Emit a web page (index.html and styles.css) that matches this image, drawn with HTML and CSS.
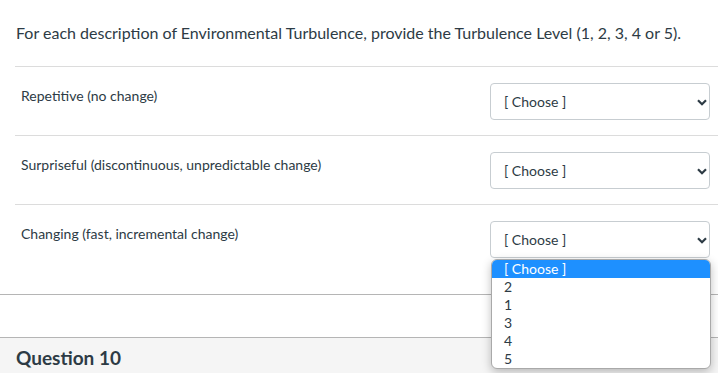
FILE: index.html
```html
<!DOCTYPE html>
<html lang="en">
<head>
    <meta charset="UTF-8">
    <title>Question 9</title>
    <link rel="stylesheet" href="styles.css">
</head>
<body>

    <!-- Question body -->
    <div class="question">
        <p class="question-text">For each description of Environmental Turbulence, provide the Turbulence Level (1, 2, 3, 4 or 5).</p>

        <div class="answers">
            <div class="answer-row">
                <span class="answer-label">Repetitive (no change)</span>
                <span class="select-wrap">
                    <select class="answer-select">
                        <option>[ Choose ]</option>
                        <option>2</option>
                        <option>1</option>
                        <option>3</option>
                        <option>4</option>
                        <option>5</option>
                    </select>
                    <svg class="chevron" width="10" height="7" viewBox="0 0 10 7"><path d="M1 1.2 L5 5.2 L9 1.2" fill="none" stroke="#2d3b45" stroke-width="2.2"/></svg>
                </span>
            </div>
            <div class="answer-row">
                <span class="answer-label">Surpriseful (discontinuous, unpredictable change)</span>
                <span class="select-wrap">
                    <select class="answer-select">
                        <option>[ Choose ]</option>
                        <option>2</option>
                        <option>1</option>
                        <option>3</option>
                        <option>4</option>
                        <option>5</option>
                    </select>
                    <svg class="chevron" width="10" height="7" viewBox="0 0 10 7"><path d="M1 1.2 L5 5.2 L9 1.2" fill="none" stroke="#2d3b45" stroke-width="2.2"/></svg>
                </span>
            </div>
            <div class="answer-row">
                <span class="answer-label">Changing (fast, incremental change)</span>
                <span class="select-wrap">
                    <select class="answer-select">
                        <option>[ Choose ]</option>
                        <option>2</option>
                        <option>1</option>
                        <option>3</option>
                        <option>4</option>
                        <option>5</option>
                    </select>
                    <svg class="chevron" width="10" height="7" viewBox="0 0 10 7"><path d="M1 1.2 L5 5.2 L9 1.2" fill="none" stroke="#2d3b45" stroke-width="2.2"/></svg>
                    <!-- open option list -->
                    <ul class="option-list">
                        <li class="selected">[ Choose ]</li>
                        <li>2</li>
                        <li>1</li>
                        <li>3</li>
                        <li>4</li>
                        <li>5</li>
                    </ul>
                </span>
            </div>
        </div>
    </div>

    <div class="question-gap"></div>

    <!-- Next question header -->
    <div class="question-header">
        <h2>Question 10</h2>
    </div>

</body>
</html>
```

FILE: styles.css
```css
body {
    font-family: Lato, "Open Sans", sans-serif;
    color: #2d3b45;
    background-color: #fff;
    margin: 0;
    padding: 0;
}
.question {
    border-bottom: 1px solid #b5b5b5;
    padding-bottom: 21px;
}
.question-text {
    margin: 0;
    padding: 21px 16px 21px 16px;
    font-size: 16px;
    line-height: 24px;
}
.answers {
    margin-left: 15px;
}
.answer-row {
    display: flex;
    justify-content: space-between;
    align-items: flex-start;
    border-top: 1px solid #dcdcdc;
    padding: 16px 8px 15px 6px;
}
.answer-label {
    font-size: 14px;
    line-height: 20px;
    padding-top: 3px;
}
.select-wrap {
    position: relative;
    display: block;
    height: 37px;
}
.answer-select {
    -webkit-appearance: none;
    appearance: none;
    display: block;
    width: 220px;
    height: 37px;
    padding: 0 30px 0 13px;
    border: 1px solid #c7cdd1;
    border-radius: 4px;
    background-color: #fff;
    font-family: Lato, sans-serif;
    font-size: 14px;
    color: #2d3b45;
}
.chevron {
    position: absolute;
    right: 3px;
    top: 16px;
    pointer-events: none;
}
.option-list {
    position: absolute;
    top: 38px;
    left: 1px;
    width: 218px;
    margin: 0;
    padding: 0;
    list-style-type: none;
    background-color: #fff;
    border: 1px solid #a9a9a9;
    border-radius: 6px;
    box-shadow: 0px 3px 10px rgba(0, 0, 0, 0.25);
    overflow: hidden;
    font-size: 14px;
    z-index: 2;
}
.option-list li {
    height: 18px;
    line-height: 18px;
    padding-left: 12px;
}
.option-list li.selected {
    background-color: #1e90ff;
    color: white;
}
.question-gap {
    height: 42px;
    border-bottom: 1px solid #b5b5b5;
}
.question-header {
    background-color: #f5f5f5;
    padding: 7px 16px 12px;
}
.question-header h2 {
    margin: 0;
    font-size: 19px;
    line-height: 26px;
    font-weight: 700;
}
```
